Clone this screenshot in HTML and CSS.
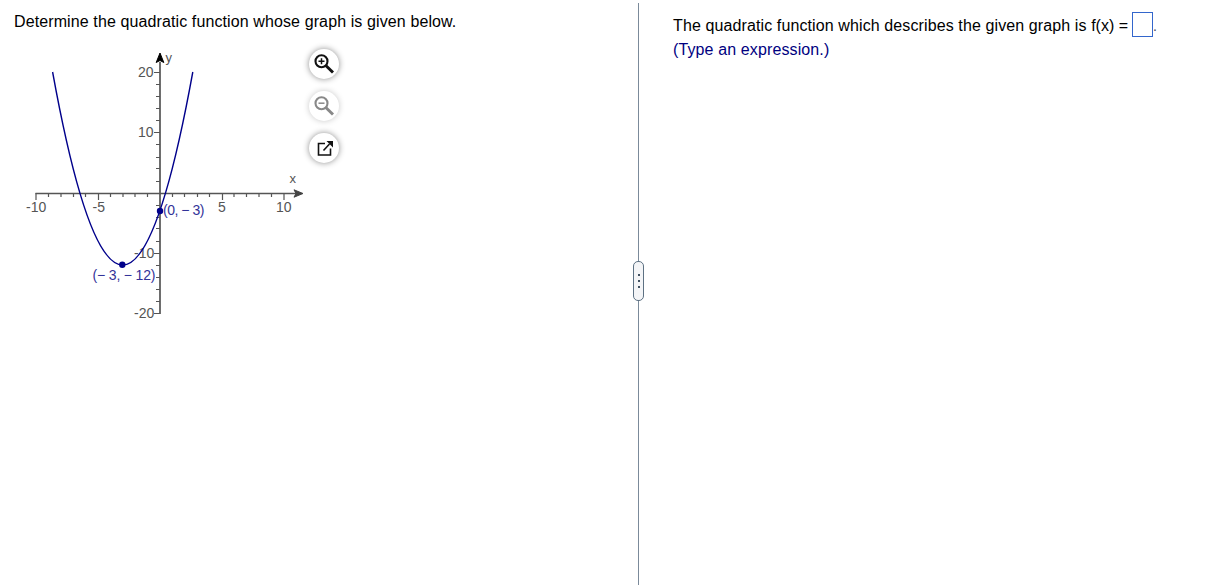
FILE: index.html
```html
<!DOCTYPE html>
<html lang="en">
<head>
<meta charset="utf-8">
<title>Quadratic function</title>
<link rel="stylesheet" href="styles.css">
</head>
<body>
<main class="exercise">
  <section class="question">
    <p class="prompt">Determine the quadratic function whose graph is given below.</p>
    <div class="figure">
      <svg class="graph" width="300" height="280" viewBox="10 46 300 280" role="img" aria-label="Graph of a parabola">
        <path class="axis" d="M35.500 193.5H298M160 62V314"/>
        <path class="ticks" d="M36 193v7M98.5 193v7M222.5 193v7M284 193v7M48.5 193v4M61 193v4M73.5 193v4M85.5 193v4M110.5 193v4M123 193v4M135 193v4M147.5 193v4M172.5 193v4M184.5 193v4M197.5 193v4M209.5 193v4M234 193v4M246.5 193v4M259 193v4M271.5 193v4M154 72.5h6M154 132.5h6M154 253.5h6M154 313.5h6M156 84.5h4M156 96.5h4M156 108.5h4M156 120.5h4M156 144.5h4M156 157.5h4M156 168.5h4M156 181.5h4M156 205.5h4M156 217.5h4M156 228.5h4M156 241.5h4M156 265.5h4M156 277.5h4M156 289.5h4M156 301.5h4"/>
        <path class="arrow-y" d="M160 53L163.800 62.500L160 60.500L156.200 62.500Z"/>
        <path class="arrow-x" d="M303 193.5L294 197.200L296 193.500L294 189.800Z"/>
        <g class="labels">
          <text x="138" y="77">20</text>
          <text x="138" y="137">10</text>
          <text x="134" y="258">-10</text>
          <text x="134" y="318">-20</text>
          <text x="26" y="212">-10</text>
          <text x="92.500" y="212">-5</text>
          <text x="218" y="212">5</text>
          <text x="276" y="212">10</text>
          <text class="name" x="165.500" y="62">y</text>
          <text class="name" x="289.500" y="183">x</text>
        </g>
        <path class="curve" d="M52.600 72Q122.700 458 192.800 72"/>
        <circle class="point" cx="122.300" cy="264.700" r="3.200"/>
        <circle class="point" cx="160" cy="211" r="3.200"/>
        <g class="coords">
          <text x="163" y="215" textLength="41.500">(0, − 3)</text>
          <text x="92.500" y="280" textLength="63">(− 3, − 12)</text>
        </g>
      </svg>
      <div class="tools">
        <button class="tool" aria-label="Zoom in">
          <svg width="22" height="22" viewBox="0 0 22 22"><circle cx="8.500" cy="8.200" r="6"/><path d="M5.500 8.200h6M8.500 5.200v6" class="thin"/><path d="M12.800 12.500l7.200 7" class="handle"/></svg>
        </button>
        <button class="tool faded" aria-label="Zoom out">
          <svg width="22" height="22" viewBox="0 0 22 22"><circle cx="8.500" cy="8.200" r="6"/><path d="M5.500 8.200h6" class="thin"/><path d="M12.800 12.500l7.200 7" class="handle"/></svg>
        </button>
        <button class="tool" aria-label="Open in new window">
          <svg width="22" height="22" viewBox="0 0 22 22"><path class="box" d="M12 6.500H5.500V18H17.500V11.500"/><path class="box" d="M10.500 13.500l6-6.500"/><path class="tip" d="M13.500 4h6.500v6.500z"/></svg>
        </button>
      </div>
    </div>
  </section>
  <div class="divider"><button class="grip" aria-label="Resize"><i></i><i></i><i></i></button></div>
  <section class="answer">
    <p class="statement"><span class="words">The quadratic function which describes the given graph is </span><span class="formula">f(x) =</span><input class="blank" aria-label="Expression"><span class="stop">.</span></p>
    <p class="hint">(Type an expression.)</p>
  </section>
</main>
</body>
</html>
```
FILE: styles.css
```css
* { box-sizing: border-box; }
body {
  margin: 0;
  background: #fff;
  color: #000;
  font: 16px/24px "Liberation Sans", Arial, sans-serif;
}
p { margin: 0; }
button { padding: 0; }
.exercise {
  display: grid;
  grid-template-columns: 631px 15px 1fr;
  height: 585px;
  overflow: hidden;
}
.question { padding: 10px 0 0 14px; }
.prompt { white-space: nowrap; letter-spacing: 0.11px; }
.figure {
  display: flex;
  margin: 12px 0 0 -4px;
}
.graph { display: block; flex: none; }
.axis { fill: none; stroke: #555; stroke-width: 1.7; }
.ticks { fill: none; stroke: #555; stroke-width: 1.2; }
.arrow-y { fill: #000; stroke: #000; }
.arrow-x { fill: #444; stroke: #444; }
.labels { fill: #555; font-size: 14px; }
.name { font-size: 13px; }
.curve { fill: none; stroke: #00008b; stroke-width: 1.4; }
.point { fill: #00008b; }
.coords { fill: #333399; font-size: 14px; }
.tools {
  display: flex;
  flex-direction: column;
  gap: 12px;
  padding-top: 3px;
  margin-left: -1px;
}
.tool {
  display: flex;
  align-items: center;
  justify-content: center;
  width: 30px;
  height: 30px;
  border: 0;
  border-radius: 50%;
  background: #fff;
  box-shadow: 0 0 6px rgba(0, 0, 0, 0.45);
}
.tool svg { fill: none; stroke: #111; stroke-width: 2.1; }
.tool .thin { stroke-width: 1.5; }
.tool .handle { stroke-width: 3; }
.tool .box { stroke-width: 1.6; }
.tool .tip { fill: #111; stroke: none; }
.tool.faded { box-shadow: 0 0 6px rgba(0, 0, 0, 0.22); }
.tool.faded svg { stroke: #888; }
.divider {
  display: flex;
  justify-content: center;
  padding-top: 261px;
  background: linear-gradient(#7b8a9a, #7b8a9a) 7px 3px / 1px 100% no-repeat;
}
.grip {
  display: flex;
  flex-direction: column;
  align-items: center;
  justify-content: center;
  gap: 4px;
  width: 11px;
  height: 40px;
  border: 1px solid #5d7183;
  border-radius: 5px;
  background: #f4f5f7;
}
.grip i { width: 2px; height: 2px; background: #405060; }
.answer { padding: 12px 0 0 27px; }
.statement {
  display: flex;
  align-items: center;
  height: 25px;
  white-space: pre;
}
.words, .formula, .stop { padding-top: 2px; }
.words { letter-spacing: 0.11px; }
.stop { color: #445; font-size: 14px; }
.blank {
  width: 21px;
  height: 25px;
  margin-left: 4px;
  padding: 0;
  border: 1px solid #3366cc;
  background: #fff;
}
.hint { padding-top: 1px; color: #00007f; letter-spacing: 0.12px; }
```
